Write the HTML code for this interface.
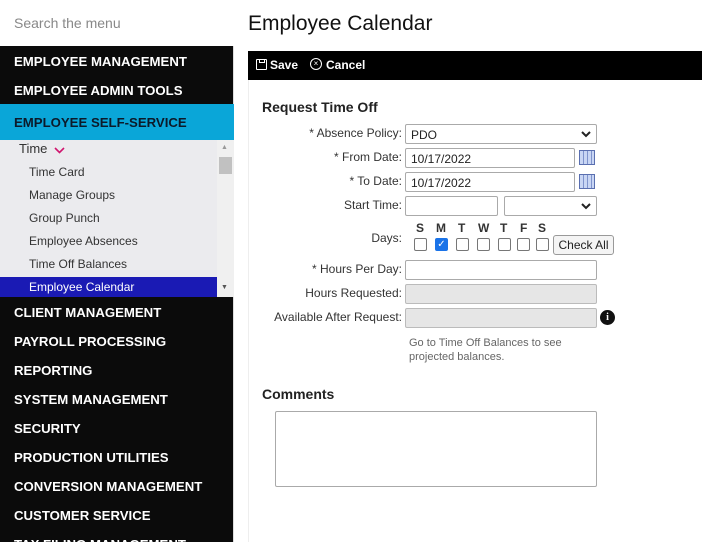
<!DOCTYPE html>
<html><head><meta charset="utf-8"><style>
*{box-sizing:border-box;margin:0;padding:0}
body{width:702px;height:542px;overflow:hidden;background:#fff;font-family:"Liberation Sans",sans-serif;position:relative;color:#222}
.a{position:absolute}
#sb{left:0;top:0;width:234px;height:542px;background:#0b0b0b;border-right:1px solid #ddd}
.srch{left:0;top:0;width:234px;height:46px;background:#fff;color:#888;font-size:14px;padding:15px 14px}
.m{left:14px;color:#fff;font-weight:bold;font-size:13.2px;white-space:nowrap}
.sub{left:0;top:140px;width:234px;height:157px;background:#ebebee}
.si{left:29px;font-size:12px;color:#333}
.lbl{font-size:12px;color:#333;text-align:right;width:200px;left:202px}
.inp{left:405px;width:192px;height:20px;border:1px solid #aaa;border-radius:2px;background:#fff;font-size:12px;padding:3px 5px;color:#222}
.dis{background:#e6e6e6;border-color:#bbb}
.cb{width:13px;height:13px;border:1px solid #777;border-radius:2px;background:#fff;top:238px}
.dl{font-size:12px;font-weight:bold;color:#333;top:221px}
.cal{width:16px;height:15px;border:1px solid #5a6fb0;background:repeating-linear-gradient(90deg,#c9d6f4 0 3px,#7f93cc 3px 4px);}
.chev{position:absolute;right:5px;top:6px}
</style></head><body>
<div id="sb" class="a">
<div class="a srch">Search the menu</div>
<div class="a m" style="top:54px">EMPLOYEE MANAGEMENT</div>
<div class="a m" style="top:83px">EMPLOYEE ADMIN TOOLS</div>
<div class="a" style="left:0;top:104px;width:234px;height:36px;background:#0aa6d8"></div>
<div class="a m" style="top:115px;color:#0c1a2a">EMPLOYEE SELF-SERVICE</div>
<div class="a sub"></div>
<div class="a" style="left:19px;top:141px;font-size:13px;color:#333">Time</div>
<svg class="a" style="left:54px;top:147px" width="11" height="7"><path d="M1 1L5.5 5.5L10 1" stroke="#d0156e" stroke-width="1.6" fill="none"/></svg>
<div class="a si" style="top:165px">Time Card</div>
<div class="a si" style="top:188px">Manage Groups</div>
<div class="a si" style="top:211px">Group Punch</div>
<div class="a si" style="top:234px">Employee Absences</div>
<div class="a si" style="top:257px">Time Off Balances</div>
<div class="a" style="left:0;top:277px;width:217px;height:20px;background:#1a1ab4"></div>
<div class="a si" style="top:280px;color:#fff">Employee Calendar</div>
<div class="a" style="left:217px;top:140px;width:17px;height:157px;background:#f0f0f0"></div>
<div class="a" style="left:219px;top:157px;width:13px;height:17px;background:#c1c1c1"></div>
<div class="a" style="left:221px;top:144px;font-size:7px;color:#999">&#9650;</div>
<div class="a" style="left:221px;top:284px;font-size:7px;color:#555">&#9660;</div>
<div class="a m" style="top:305px">CLIENT MANAGEMENT</div>
<div class="a m" style="top:334px">PAYROLL PROCESSING</div>
<div class="a m" style="top:363px">REPORTING</div>
<div class="a m" style="top:392px">SYSTEM MANAGEMENT</div>
<div class="a m" style="top:421px">SECURITY</div>
<div class="a m" style="top:450px">PRODUCTION UTILITIES</div>
<div class="a m" style="top:479px">CONVERSION MANAGEMENT</div>
<div class="a m" style="top:508px">CUSTOMER SERVICE</div>
<div class="a m" style="top:537px">TAX FILING MANAGEMENT</div>
</div>
<div class="a" style="left:248px;top:12px;font-size:21px;color:#111">Employee Calendar</div>
<div class="a" style="left:248px;top:51px;width:454px;height:29px;background:#000"></div>
<div class="a" style="left:248px;top:80px;width:1px;height:462px;background:#eee"></div>
<div class="a" style="left:256px;top:59px;width:11px;height:11px;border:1.5px solid #fff;border-radius:1px"></div>
<div class="a" style="left:258.5px;top:59px;width:6px;height:4px;border:1.5px solid #fff;border-top:0"></div>
<div class="a" style="left:270px;top:58px;font-size:12px;font-weight:bold;color:#fff">Save</div>
<div class="a" style="left:310px;top:58px;width:12px;height:12px;border:1.5px solid #fff;border-radius:50%;color:#fff;font-size:8px;line-height:9px;text-align:center">×</div>
<div class="a" style="left:326px;top:58px;font-size:12px;font-weight:bold;color:#fff">Cancel</div>
<div class="a" style="left:262px;top:99px;font-size:14px;font-weight:bold;color:#222">Request Time Off</div>
<div class="a lbl" style="top:126px">* Absence Policy:</div>
<div class="a inp" style="top:124px">PDO<svg class="chev" width="10" height="7"><path d="M1 1L5 5L9 1" stroke="#222" stroke-width="2" fill="none"/></svg></div>
<div class="a lbl" style="top:150px">* From Date:</div>
<div class="a inp" style="top:148px;width:170px">10/17/2022</div>
<div class="a cal" style="left:579px;top:150px"></div>
<div class="a lbl" style="top:174px">* To Date:</div>
<div class="a inp" style="top:172px;width:170px">10/17/2022</div>
<div class="a cal" style="left:579px;top:174px"></div>
<div class="a lbl" style="top:198px">Start Time:</div>
<div class="a inp" style="top:196px;width:93px"></div>
<div class="a inp" style="top:196px;left:504px;width:93px"><svg class="chev" width="10" height="7"><path d="M1 1L5 5L9 1" stroke="#222" stroke-width="2" fill="none"/></svg></div>
<div class="a lbl" style="top:231px">Days:</div>
<div class="a dl" style="left:416px">S</div><div class="a dl" style="left:436px">M</div><div class="a dl" style="left:458px">T</div><div class="a dl" style="left:478px">W</div><div class="a dl" style="left:500px">T</div><div class="a dl" style="left:520px">F</div><div class="a dl" style="left:538px">S</div>
<div class="a cb" style="left:414px"></div>
<div class="a cb" style="left:435px;background:#1a73e8;border-color:#1a73e8;color:#fff;font-size:10px;line-height:11px;text-align:center">✓</div>
<div class="a cb" style="left:456px"></div><div class="a cb" style="left:477px"></div><div class="a cb" style="left:498px"></div><div class="a cb" style="left:517px"></div><div class="a cb" style="left:536px"></div>
<div class="a" style="left:553px;top:235px;width:61px;height:20px;border:1px solid #999;border-radius:3px;background:#f4f4f4;font-size:12px;text-align:center;line-height:18px">Check All</div>
<div class="a lbl" style="top:262px">* Hours Per Day:</div>
<div class="a inp" style="top:260px"></div>
<div class="a lbl" style="top:286px">Hours Requested:</div>
<div class="a inp dis" style="top:284px"></div>
<div class="a lbl" style="top:310px">Available After Request:</div>
<div class="a inp dis" style="top:308px"></div>
<div class="a" style="left:600px;top:310px;width:15px;height:15px;border-radius:50%;background:#111;color:#fff;font-size:10px;font-weight:bold;text-align:center;line-height:15px;font-family:'Liberation Serif',serif">i</div>
<div class="a" style="left:409px;top:336px;font-size:11px;color:#666;line-height:14px">Go to Time Off Balances to see<br>projected balances.</div>
<div class="a" style="left:262px;top:386px;font-size:14px;font-weight:bold;color:#222">Comments</div>
<div class="a" style="left:275px;top:411px;width:322px;height:76px;border:1px solid #aaa;border-radius:2px"></div>
</body></html>
